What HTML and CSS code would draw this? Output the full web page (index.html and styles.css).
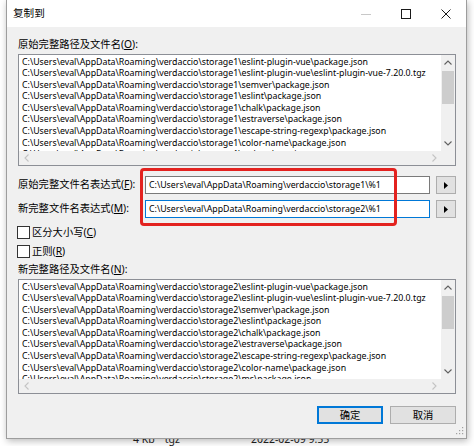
FILE: index.html
```html
<!DOCTYPE html>
<html>
<head>
<meta charset="utf-8">
<title>复制到</title>
<link rel="stylesheet" href="styles.css">
</head>
<body>
<div class="window">
  <div class="titlebar">
    <span class="title">复制到</span>
    <div class="caption-btns">
      <span class="cbtn"><svg width="10" height="10" viewBox="0 0 10 10"><path d="M0 5.5H10" stroke="#c8c8c8" stroke-width="1"/></svg></span>
      <span class="cbtn"><svg width="10" height="10" viewBox="0 0 10 10"><rect x="0.5" y="0.5" width="9" height="9" fill="none" stroke="#1a1a1a" stroke-width="1"/></svg></span>
      <span class="cbtn"><svg width="10" height="10" viewBox="0 0 10 10"><path d="M0.5 0.5L9.5 9.5M9.5 0.5L0.5 9.5" stroke="#1a1a1a" stroke-width="1"/></svg></span>
    </div>
  </div>
  <div class="content">
    <div class="label l-first">原始完整路径及文件名(<u>O</u>):</div>
    <div class="listbox lb-src">
      <div class="lines">
        <div>C:\Users\eval\AppData\Roaming\verdaccio\storage1\eslint-plugin-vue\package.json</div>
        <div>C:\Users\eval\AppData\Roaming\verdaccio\storage1\eslint-plugin-vue\eslint-plugin-vue-7.20.0.tgz</div>
        <div>C:\Users\eval\AppData\Roaming\verdaccio\storage1\semver\package.json</div>
        <div>C:\Users\eval\AppData\Roaming\verdaccio\storage1\eslint\package.json</div>
        <div>C:\Users\eval\AppData\Roaming\verdaccio\storage1\chalk\package.json</div>
        <div>C:\Users\eval\AppData\Roaming\verdaccio\storage1\estraverse\package.json</div>
        <div>C:\Users\eval\AppData\Roaming\verdaccio\storage1\escape-string-regexp\package.json</div>
        <div>C:\Users\eval\AppData\Roaming\verdaccio\storage1\color-name\package.json</div>
        <div>C:\Users\eval\AppData\Roaming\verdaccio\storage1\ms\package.json</div>
      </div>
      <div class="vscroll">
        <span class="sarrow"><svg width="8" height="5" viewBox="0 0 8 5"><path d="M0.5 4.5L4 1L7.5 4.5" fill="none" stroke="#606060" stroke-width="1.1"/></svg></span>
        <span class="track"><span class="thumb"></span></span>
        <span class="sarrow"><svg width="8" height="5" viewBox="0 0 8 5"><path d="M0.5 0.5L4 4L7.5 0.5" fill="none" stroke="#606060" stroke-width="1.1"/></svg></span>
      </div>
      <div class="hscroll">
        <span class="sarrow"><svg width="5" height="8" viewBox="0 0 5 8"><path d="M4.5 0.5L1 4L4.5 7.5" fill="none" stroke="#c4c4c4" stroke-width="1.1"/></svg></span>
        <span class="sarrow"><svg width="5" height="8" viewBox="0 0 5 8"><path d="M0.5 0.5L4 4L0.5 7.5" fill="none" stroke="#c4c4c4" stroke-width="1.1"/></svg></span>
      </div>
      <div class="corner"></div>
    </div>

    <div class="exprow r-first">
      <span class="rlabel">原始完整文件名表达式(<u>F</u>):</span>
      <span class="textbox">C:\Users\eval\AppData\Roaming\verdaccio\storage1\%1</span>
      <span class="pick"><svg width="4" height="7" viewBox="0 0 4 7"><path d="M0 0L4 3.5L0 7Z" fill="#000"/></svg></span>
    </div>
    <div class="exprow r-second">
      <span class="rlabel">新完整文件名表达式(<u>M</u>):</span>
      <span class="textbox focused">C:\Users\eval\AppData\Roaming\verdaccio\storage2\%1</span>
      <span class="pick"><svg width="4" height="7" viewBox="0 0 4 7"><path d="M0 0L4 3.5L0 7Z" fill="#000"/></svg></span>
    </div>

    <div class="check c-first"><span class="box"></span><span>区分大小写(<u>C</u>)</span></div>
    <div class="check c-second"><span class="box"></span><span>正则(<u>R</u>)</span></div>

    <div class="label l-second">新完整路径及文件名(<u>N</u>):</div>
    <div class="listbox lb-dst">
      <div class="lines">
        <div>C:\Users\eval\AppData\Roaming\verdaccio\storage2\eslint-plugin-vue\package.json</div>
        <div>C:\Users\eval\AppData\Roaming\verdaccio\storage2\eslint-plugin-vue\eslint-plugin-vue-7.20.0.tgz</div>
        <div>C:\Users\eval\AppData\Roaming\verdaccio\storage2\semver\package.json</div>
        <div>C:\Users\eval\AppData\Roaming\verdaccio\storage2\eslint\package.json</div>
        <div>C:\Users\eval\AppData\Roaming\verdaccio\storage2\chalk\package.json</div>
        <div>C:\Users\eval\AppData\Roaming\verdaccio\storage2\estraverse\package.json</div>
        <div>C:\Users\eval\AppData\Roaming\verdaccio\storage2\escape-string-regexp\package.json</div>
        <div>C:\Users\eval\AppData\Roaming\verdaccio\storage2\color-name\package.json</div>
        <div>C:\Users\eval\AppData\Roaming\verdaccio\storage2\ms\package.json</div>
      </div>
      <div class="vscroll">
        <span class="sarrow"><svg width="8" height="5" viewBox="0 0 8 5"><path d="M0.5 4.5L4 1L7.5 4.5" fill="none" stroke="#606060" stroke-width="1.1"/></svg></span>
        <span class="track"><span class="thumb"></span></span>
        <span class="sarrow"><svg width="8" height="5" viewBox="0 0 8 5"><path d="M0.5 0.5L4 4L7.5 0.5" fill="none" stroke="#606060" stroke-width="1.1"/></svg></span>
      </div>
      <div class="hscroll">
        <span class="sarrow"><svg width="5" height="8" viewBox="0 0 5 8"><path d="M4.5 0.5L1 4L4.5 7.5" fill="none" stroke="#c4c4c4" stroke-width="1.1"/></svg></span>
        <span class="sarrow"><svg width="5" height="8" viewBox="0 0 5 8"><path d="M0.5 0.5L4 4L0.5 7.5" fill="none" stroke="#c4c4c4" stroke-width="1.1"/></svg></span>
      </div>
      <div class="corner"></div>
    </div>

    <div class="actions">
      <span class="btn default">确定</span>
      <span class="btn">取消</span>
    </div>
  </div>
  <div class="highlight"></div>
  <svg class="grip" width="8" height="8" viewBox="0 0 8 8">
    <rect x="6" y="0" width="1.2" height="1.2" fill="#a0a0a0"/>
    <rect x="3" y="3" width="1.2" height="1.2" fill="#a0a0a0"/>
    <rect x="6" y="3" width="1.2" height="1.2" fill="#a0a0a0"/>
    <rect x="0" y="6" width="1.2" height="1.2" fill="#a0a0a0"/>
    <rect x="3" y="6" width="1.2" height="1.2" fill="#a0a0a0"/>
    <rect x="6" y="6" width="1.2" height="1.2" fill="#a0a0a0"/>
  </svg>
</div>
<div class="under">
  <span class="size">4 Kb</span>
  <span class="ext">tgz</span>
  <span class="date">2022-02-09 9:55</span>
</div>
</body>
</html>
```

FILE: styles.css
```css
* { box-sizing: border-box; }
html, body { margin: 0; padding: 0; }
body {
  width: 474px;
  height: 446px;
  overflow: hidden;
  background: #ffffff;
  font-family: "Noto Sans", "Noto Sans CJK SC", sans-serif;
  color: #000;
}
u { text-decoration: underline; text-underline-offset: 1px; }

.window {
  position: relative;
  z-index: 1;
  margin-left: 6px;
  width: 461px;
  height: 439px;
  border: 1px solid #9d9d9d;
  border-top: none;
  background: #f0f0f0;
  box-shadow: 1px 2px 7px rgba(0, 0, 0, 0.28);
  display: flex;
  flex-direction: column;
}

.titlebar {
  height: 27px;
  flex: none;
  background: #ffffff;
  display: flex;
  align-items: center;
  justify-content: space-between;
}
.title {
  font-size: 10.6px;
  line-height: 14px;
  padding-left: 6px;
  padding-bottom: 1px;
}
.caption-btns { display: flex; height: 27px; }
.cbtn {
  width: 40px;
  height: 27px;
  display: flex;
  align-items: center;
  justify-content: center;
}

.content {
  flex: 1;
  padding: 0 10px 0 11px;
  display: flex;
  flex-direction: column;
}

.label {
  font-size: 10.3px;
  line-height: 14px;
  height: 14px;
  white-space: nowrap;
}
.l-first { margin-top: 10px; }
.l-second { margin-top: 4px; }

.listbox {
  margin-top: 3px;
  border: 1px solid #8c8f96;
  background: #ffffff;
  display: grid;
  grid-template-columns: 1fr 14px;
  grid-template-rows: 1fr 14px;
  overflow: hidden;
}
.lb-src { height: 112px; }
.lb-dst { height: 115px; }

.lines {
  overflow: hidden;
  padding: 1.5px 0 0 3px;
  font-size: 8.8px;
  line-height: 11.6px;
  white-space: nowrap;
  color: #000;
}

.vscroll {
  background: #f0f0f0;
  display: flex;
  flex-direction: column;
}
.sarrow {
  flex: none;
  display: flex;
  align-items: center;
  justify-content: center;
}
.vscroll .sarrow { height: 15px; }
.track { flex: 1; display: flex; flex-direction: column; }
.thumb {
  margin: 1px 1px 0 1px;
  height: 33px;
  background: #cdcdcd;
}
.hscroll {
  background: #f0f0f0;
  display: flex;
  justify-content: space-between;
}
.hscroll .sarrow { width: 14px; }
.corner { background: #f0f0f0; }

.exprow {
  display: flex;
  align-items: center;
  height: 18px;
}
.r-first { margin-top: 10px; }
.r-second { margin-top: 6px; }
.rlabel {
  width: 127px;
  flex: none;
  font-size: 10.3px;
  line-height: 14px;
  white-space: nowrap;
  margin-top: -2px;
}
.textbox {
  width: 285px;
  height: 18px;
  flex: none;
  border: 1px solid #7a7a7a;
  background: #ffffff;
  font-size: 8.8px;
  line-height: 16px;
  padding-left: 3px;
  white-space: nowrap;
  overflow: hidden;
}
.textbox.focused { border-color: #0078d7; }
.pick {
  margin-left: 6px;
  width: 20px;
  height: 18px;
  flex: none;
  border: 1px solid #adadad;
  background: #e1e1e1;
  display: flex;
  align-items: center;
  justify-content: center;
}

.check {
  display: flex;
  align-items: center;
  height: 13px;
  margin-left: -1px;
  font-size: 10.3px;
  line-height: 13px;
  white-space: nowrap;
}
.c-first { margin-top: 8px; }
.c-second { margin-top: 6px; }
.box {
  width: 13px;
  height: 13px;
  flex: none;
  border: 1px solid #333333;
  background: #ffffff;
  margin-right: 2px;
}

.actions {
  margin-top: 12px;
  display: flex;
  justify-content: flex-end;
  gap: 7px;
}
.btn {
  width: 66px;
  height: 18px;
  border: 1px solid #adadad;
  background: #e1e1e1;
  font-size: 10.3px;
  line-height: 16px;
  text-align: center;
}
.btn.default {
  border: 2px solid #0078d7;
  line-height: 14px;
}

.highlight {
  position: absolute;
  left: 133px;
  top: 168px;
  width: 257px;
  height: 58px;
  border: 3px solid #e3221f;
  border-radius: 4px;
}

.grip {
  position: absolute;
  right: 2px;
  bottom: 3px;
}

.under {
  position: relative;
  z-index: 0;
  margin-top: -7px;
  height: 14px;
  display: flex;
  font-family: "Noto Sans", sans-serif;
  font-size: 10.5px;
  line-height: 14px;
  color: #222;
  white-space: nowrap;
}
.size { margin-left: 133px; }
.ext { margin-left: 10px; }
.date { margin-left: 71px; }
```
